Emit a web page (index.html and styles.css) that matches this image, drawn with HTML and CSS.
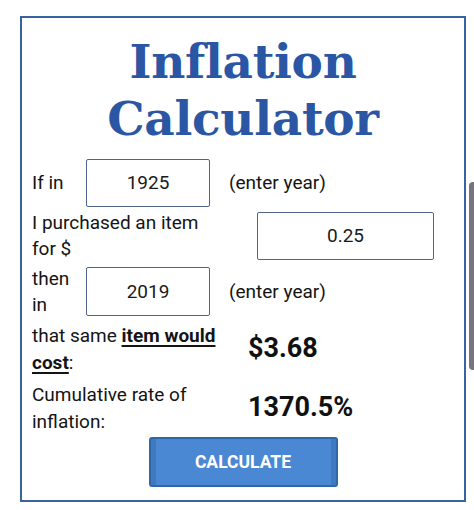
FILE: index.html
```html
<!DOCTYPE html>
<html>
<head>
<meta charset="utf-8">
<link rel="stylesheet" href="styles.css">
</head>
<body>
<div class="calc">
  <h1 class="title">Inflation<br>Calculator</h1>
  <div class="row row-year">
    <div class="label lab-short">If in</div>
    <div class="field field-year">1925</div>
    <div class="hint">(enter year)</div>
  </div>
  <div class="row row-amount">
    <div class="label lab-wide">I purchased an item<br>for $</div>
    <div class="field field-amount">0.25</div>
  </div>
  <div class="row row-year2">
    <div class="label lab-short">then<br>in</div>
    <div class="field field-year">2019</div>
    <div class="hint">(enter year)</div>
  </div>
  <div class="row row-result">
    <div class="label lab-result">that same <b class="ul">item would<br>cost</b>:</div>
    <div class="value">$3.68</div>
  </div>
  <div class="row row-result">
    <div class="label lab-result">Cumulative rate of<br>inflation:</div>
    <div class="value">1370.5%</div>
  </div>
  <div class="actions">
    <button class="btn">CALCULATE</button>
  </div>
</div>
<div class="scrollbar"></div>
</body>
</html>
```

FILE: styles.css
```css
html, body {
  margin: 0;
  padding: 0;
  background: #fff;
}

body {
  width: 474px;
  height: 510px;
  position: relative;
  overflow: hidden;
  font-family: Roboto, "Liberation Sans", sans-serif;
  color: #141414;
}

.calc {
  margin: 16px 0 0 20px;
  width: 442px;
  height: 482px;
  border: 2px solid #3b62a0;
  display: flex;
  flex-direction: column;
}

.title {
  margin: 15px 0 0 0;
  text-align: center;
  font-family: "DejaVu Serif", "Liberation Serif", serif;
  font-weight: bold;
  font-size: 47px;
  letter-spacing: -0.3px;
  line-height: 57px;
  color: #2a56a4;
  height: 126px;
}

.row {
  display: flex;
  align-items: center;
  padding-left: 10px;
  font-size: 19px;
  line-height: 26px;
}

.row-year { height: 48px; }
.row-amount { height: 48px; margin-top: 5px; }
.row-year2 { height: 49px; margin-top: 7px; }
.row-result { height: 53px; margin-top: 6px; line-height: 27px; }

.lab-short { width: 54px; }
.lab-wide { width: 225px; }
.lab-result { width: 216px; }

.ul {
  text-decoration: underline;
  text-decoration-thickness: 2px;
  text-underline-offset: 3px;
}

.field {
  box-sizing: border-box;
  height: 100%;
  border: 1.5px solid #4f6488;
  border-radius: 2px;
  display: flex;
  align-items: center;
  justify-content: center;
  font-size: 19px;
  color: #1a1a1a;
}

.field-year { width: 124px; }
.field-amount { width: 177px; }

.hint {
  margin-left: 19px;
}

.value {
  font-size: 27px;
  font-weight: bold;
  color: #111;
}

.actions {
  display: flex;
  justify-content: center;
  margin-top: 3px;
}

.btn {
  width: 189px;
  height: 50px;
  border: 2px solid #2f67a8;
  border-radius: 3px;
  background: #4a88d4;
  box-shadow: inset 5px 0 0 #3f79c0, inset -5px 0 0 #3f79c0;
  color: #fff;
  font-family: Roboto, "Liberation Sans", sans-serif;
  font-weight: bold;
  font-size: 17.5px;
}

.scrollbar {
  position: absolute;
  left: 469px;
  top: 182px;
  width: 8px;
  height: 188px;
  border-radius: 4px;
  background: #77737f;
}
```
